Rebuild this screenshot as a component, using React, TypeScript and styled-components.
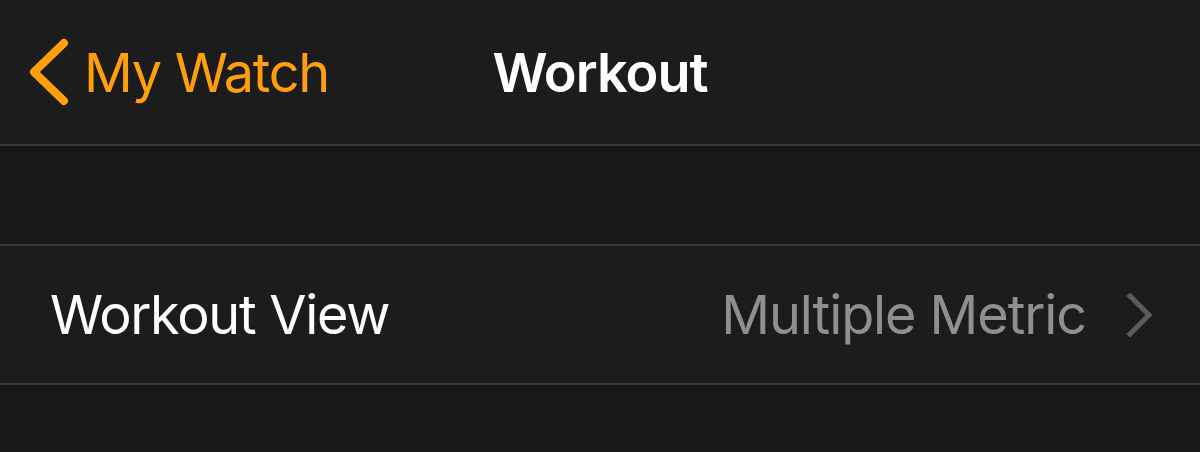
import React from 'react';
import styled, { createGlobalStyle } from 'styled-components';

const GlobalStyle = createGlobalStyle`
  html, body {
    margin: 0;
    padding: 0;
    background: #171717;
  }
  body {
    font-family: Inter, "Noto Sans", "Liberation Sans", sans-serif;
    -webkit-font-smoothing: antialiased;
  }
`;

const Screen = styled.div`
  width: 1200px;
  height: 452px;
  overflow: hidden;
  background: #171717;
  display: flex;
  flex-direction: column;
`;

const NavBar = styled.header`
  position: relative;
  height: 144px;
  flex-shrink: 0;
  background: #1c1c1c;
  border-bottom: 2px solid #383838;
  display: flex;
  align-items: center;
  justify-content: center;
`;

const BackButton = styled.button`
  position: absolute;
  left: 26px;
  top: 0;
  bottom: 0;
  display: flex;
  align-items: center;
  gap: 14px;
  background: none;
  border: none;
  padding: 0;
  color: #ff9f0a;
  font: inherit;
  font-size: 54px;
  font-weight: 400;
  letter-spacing: -1.3px;
  cursor: pointer;
`;

const Title = styled.h1`
  margin: 0;
  color: #ffffff;
  font-size: 54px;
  font-weight: 600;
  letter-spacing: -1px;
`;

const SectionGap = styled.div`
  height: 98px;
  flex-shrink: 0;
`;

const Group = styled.section`
  background: #1c1c1c;
  border-top: 2px solid #383838;
  border-bottom: 2px solid #383838;
`;

const Row = styled.div`
  height: 137px;
  display: flex;
  align-items: center;
  padding: 0 46px 0 50px;
`;

const RowLabel = styled.span`
  flex: 1;
  color: #ffffff;
  font-size: 54px;
  font-weight: 400;
  letter-spacing: -1.3px;
`;

const RowValue = styled.span`
  color: #8e8e93;
  font-size: 54px;
  font-weight: 400;
  letter-spacing: -1.1px;
  margin-right: 40px;
`;

const BackChevron = () => (
  <svg width="44" height="70" viewBox="0 0 44 70">
    <path
      d="M38 6 L8 35 L38 64"
      fill="none"
      stroke="currentColor"
      strokeWidth="8"
      strokeLinecap="round"
      strokeLinejoin="round"
    />
  </svg>
);

const Disclosure = () => (
  <svg width="28" height="44" viewBox="0 0 28 44">
    <path
      d="M4 3 L23 22 L4 41"
      fill="none"
      stroke="#5b5b5f"
      strokeWidth="5"
      strokeLinecap="square"
    />
  </svg>
);

const App: React.FC = () => (
  <>
    <GlobalStyle />
    <Screen>
      <NavBar>
        <BackButton>
          <BackChevron />
          My Watch
        </BackButton>
        <Title>Workout</Title>
      </NavBar>
      <SectionGap />
      <Group>
        <Row>
          <RowLabel>Workout View</RowLabel>
          <RowValue>Multiple Metric</RowValue>
          <Disclosure />
        </Row>
      </Group>
    </Screen>
  </>
);

export default App;
